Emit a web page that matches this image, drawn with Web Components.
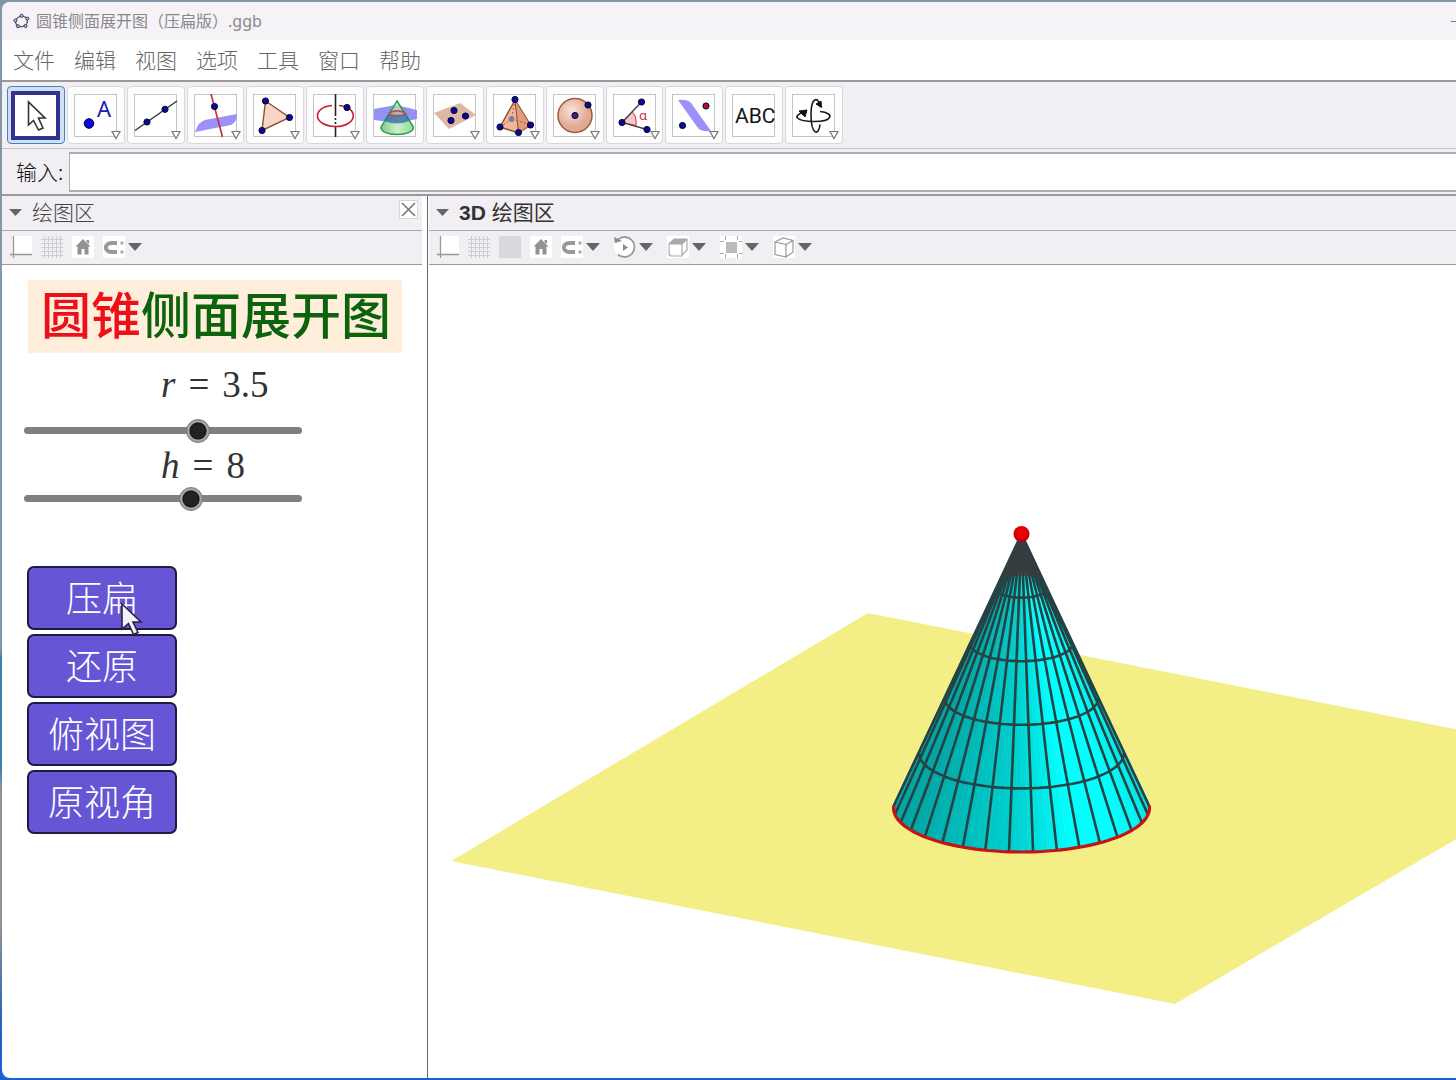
<!DOCTYPE html>
<html lang="zh-CN">
<head>
<meta charset="utf-8">
<title>圆锥侧面展开图（压扁版）.ggb</title>
<style>
html,body{height:100%}
body{margin:0;overflow:hidden;font-family:"Noto Sans","Noto Sans CJK SC",sans-serif;
background:linear-gradient(#8497a6 0 60%,#3f7fae 61% 71%,#8f9298 73% 86%,#2f63b8 94%,#1660d8)}
dock-panel b{font-weight:700}
.space .name{font-weight:400;color:#333}
</style>
</head>
<body>
<app-window>
  <title-bar slot="top">圆锥侧面展开图（压扁版）.ggb</title-bar>
  <menu-bar slot="top" items="文件 编辑 视图 选项 工具 窗口 帮助"></menu-bar>
  <tool-bar slot="top"></tool-bar>
  <command-bar slot="top"></command-bar>
  <dock-panel class="plane" closable>
    <span slot="title" class="name">绘图区</span>
    <style-bar slot="tools" icons="axes grid home magnet"></style-bar>
    <control-board></control-board>
  </dock-panel>
  <dock-panel class="space">
    <span slot="title" class="name"><b>3D</b> 绘图区</span>
    <style-bar slot="tools" icons="axes grid plane home magnet rotate view clip cube"></style-bar>
    <cone-view></cone-view>
  </dock-panel>
</app-window>

<script>
function define(name, html, setup){
  const t = document.createElement('template');
  t.innerHTML = html;
  customElements.define(name, class extends HTMLElement{
    constructor(){ super(); this.attachShadow({mode:'open'}).append(t.content.cloneNode(true)); }
    connectedCallback(){ if(setup && !this.ready){ this.ready = true; setup(this, this.shadowRoot); } }
  });
}

define('app-window', `
<style>
:host{display:flex;flex-direction:column;height:100vh;box-sizing:border-box;padding:2px 0 2px 2px}
.frame{flex:1;display:flex;flex-direction:column;min-height:0;background:#fff;border-radius:8px 0 0 8px;overflow:hidden}
.docks{flex:1;display:flex;min-height:0}
::slotted(.plane){flex:0 0 420px;min-width:0;border-right:1px solid #666;padding-right:5px}
::slotted(.space){flex:1;min-width:0;margin-left:1px}
</style>
<div class="frame"><slot name="top"></slot><div class="docks"><slot></slot></div></div>`);

define('title-bar', `
<style>
:host{display:flex;align-items:center;height:38px;background:#f5f3f7;color:#8a888c;font-size:16px;line-height:22px}
svg{display:block;margin:0 6px 0 11px}
.name{flex:1}
button{border:0;background:none;padding:0;width:5px;height:20px;display:flex;align-items:center}
button i{height:1px;width:5px;background:#777}
</style>
<svg width="17" height="17" viewBox="0 0 17 17"><ellipse cx="8.5" cy="8.5" rx="6" ry="5.2" fill="none" stroke="#66646c" stroke-width="1.4" transform="rotate(-20 8.5 8.5)"/><g fill="#c9c6f2" stroke="#33315e"><circle cx="8.5" cy="2.8" r="1.5"/><circle cx="14.4" cy="5.6" r="1.5"/><circle cx="12.5" cy="13" r="1.5"/><circle cx="5" cy="13.2" r="1.5"/><circle cx="2.4" cy="7.5" r="1.5"/></g></svg>
<span class="name"><slot></slot></span>
<button aria-label="最小化"><i></i></button>`);

define('menu-bar', `
<style>
:host{display:block;background:#fff;border-bottom:2px solid #9b999c}
nav{display:flex;gap:19px;padding:0 11px 2px;height:38px;align-items:center}
button{border:0;background:none;padding:0;font:300 21px/30px "Noto Sans CJK SC",sans-serif;color:#666}
</style><nav></nav>`, (el, root) => {
  root.querySelector('nav').innerHTML = el.getAttribute('items').split(' ').map(x => `<button>${x}</button>`).join('');
});

define('tool-button', `
<style>
:host{display:flex;flex:1;min-width:0}
button{flex:1;min-width:0;display:flex;justify-content:center;align-items:center;padding:0;border:1px solid #d9d7dc;border-radius:4px;background:#fdfdfe;height:58px;overflow:hidden}
:host([selected]) button{border-color:#4d7fb8;background:#cfe1f6}
</style><button><slot></slot></button>`, (el, root) => root.querySelector('button').setAttribute('aria-label', el.getAttribute('label')));

const dot = (x,y,r=3.1,f='#0a0a8c') => `<circle cx="${x}" cy="${y}" r="${r}" fill="${f}" stroke="#05053c" stroke-width="1"/>`;
const TOOLS = [
 ['移动', `<rect x="13" y="93" width="45" height="45" fill="#fff" stroke="#33338e" stroke-width="4"/><path d="M28.5 102V125L33.5 120.5L38.5 130L43 128L38.5 118H45Z" fill="#fff" stroke="#333" stroke-width="1.6"/>`, 'bare'],
 ['点', dot(89,123.5,4.8,'#0808d8')+`<text x="97" y="117" font-family="Noto Sans" font-size="22" fill="#1717c4">A</text>`],
 ['直线', `<path d="M135 130.5L177 101" stroke="#333" stroke-width="1.4"/>`+dot(147,122)+dot(165,109.3)],
 ['垂线', `<path d="M195 132Q199 121 205 120L237 114Q237 122 231 125Z" fill="#9a92fa"/><path d="M211 94L222.5 137" stroke="#c8283c" stroke-width="1.6"/>`+dot(214.5,106.5)],
 ['多边形', `<path d="M265.5 101L289.5 117.5L262 130.5Z" fill="#f8d5c6" stroke="#8a5233" stroke-width="1.4"/>`+dot(265.5,101)+dot(289.5,117.5)+dot(262,130.5)],
 ['绕轴圆', `<path d="M335.5 94V137" stroke="#222" stroke-width="1.6" stroke-dasharray="22 2 2 2 2 2 20"/><path d="M339 105.5C359 107 358 126 336 126.5C312 126 312 107 332 105.5" fill="none" stroke="#cc1f2e" stroke-width="1.6"/>`+dot(347,107.5)],
 ['相交曲线', `<path d="M374 109L396 105L417 110L417 119L397 123L374 120Z" fill="#9291f4"/><path d="M397 101L413.5 127C414 137 380 137 381 127Z" fill="url(#gr)" fill-opacity=".75" stroke="#2a9a3c" stroke-width="1.4"/><path d="M384.5 121Q397 126 409.5 121L405.5 114H388.5Z" fill="#2b5cae" opacity=".65"/><path d="M388.5 113.5Q397 119 406 113.5Q397 108 388.5 113.5" fill="#b0a4a8" fill-opacity=".6" stroke="#c04343" stroke-width="1.4"/>`, 'flat'],
 ['平面', `<path d="M434 113L460 103L476 115L449 129Z" fill="#ddb7a8"/>`+dot(454,110.5)+dot(465.5,116)+dot(451,120.5)],
 ['棱锥', `<path d="M515 100L500 127L518.5 133L530.5 125Z" fill="#efb89c" stroke="#8a4a2e" stroke-width="1.4"/><path d="M518.5 133L530.5 125L515 100Z" fill="#dd9270" opacity=".7"/><path d="M515 100L518.5 133" stroke="#8a4a2e"/><path d="M515 100L511.5 119L530.5 125M511.5 119L500 127" fill="none" stroke="#b54d3c" stroke-dasharray="2 2"/><circle cx="511.5" cy="119" r="3" fill="#817d9c"/>`+dot(515,99.5)+dot(500,127)+dot(518.5,132.5)+dot(530.5,125)],
 ['球面', `<circle cx="575" cy="115.5" r="17" fill="url(#sp)" stroke="#9c5b3a" stroke-width="1.5"/>`+dot(575,115.5,3.1,'#402078')+dot(588,105)],
 ['角度', `<path d="M622 122.5L632 112Q637 116 636 125.5Z" fill="#f8c6cc" stroke="#d02c40"/><path d="M641.5 102L622 122.5L647 129.5" fill="none" stroke="#444" stroke-width="1.4"/><text x="639" y="120" font-family="Noto Sans" font-size="13" fill="#d02c40">α</text>`+dot(641.5,102)+dot(622,122.5)+dot(647,129.5)],
 ['平面对称', `<path d="M678 100Q687 99 691 103L711 131Q702 132 698 128Z" fill="#9a92fa"/>`+dot(682.5,125.5)+dot(706,106,3.1,'#b01420')],
 ['文本', `<text x="735" y="123" font-family="Roboto" font-size="21" fill="#151515">ABC</text>`, 'flat'],
 ['旋转视图', `<g fill="none" stroke="#1a1a1a" stroke-width="1.6"><path d="M820.5 107C818 95 811 98 811 114C811 136 819 136 820 124.5"/><path d="M804 112C791 116 797 121.5 814 121.5C833 121.5 835 113 820 111.5"/></g><path d="M816 104L821.5 107.5L821 101ZM799 111L807 110L805 117Z" fill="#111" stroke="#111"/>`]
];
define('tool-bar', `
<style>
:host{display:block;background:#f1eff3;border-bottom:1px solid #c3c1c5}
.row{display:flex;gap:2px;max-width:836px;padding:4px 5px}
svg{flex:none;display:block}
</style><div class="row"></div>`, (el, root) => {
  root.querySelector('.row').innerHTML = TOOLS.map(([label, art, kind], i) => {
    const x = Math.round(7 + 59.85*i);
    return `<tool-button label="${label}" ${i ? '' : 'selected'}><svg width="56" height="56" viewBox="${x+1} 87 56 56">
      <defs><linearGradient id="gr"><stop stop-color="#58b868"/><stop offset=".5" stop-color="#b6ecb8"/><stop offset="1" stop-color="#6cca78"/></linearGradient><radialGradient id="sp" cx=".4" cy=".35"><stop stop-color="#fae2d8"/><stop offset="1" stop-color="#e0aa92"/></radialGradient></defs>
      ${kind==='bare' ? '' : `<rect x="${x+7}.5" y="94.5" width="42" height="42" fill="#fff" stroke="#c4c4c8"/>`}${art}
      ${kind ? '' : `<path d="M${x+45} 131.5H${x+53}L${x+49} 138.5Z" fill="#fff" stroke="#777" stroke-width="1.2"/>`}</svg></tool-button>`;
  }).join('');
});

define('command-bar', `
<style>
:host{display:block;background:#f1eff3;border-bottom:2px solid #9b999c}
form{display:flex;align-items:center;padding:3px 0 2px 14px;gap:3px}
label{font:300 21px/30px "Noto Sans CJK SC",sans-serif;color:#111;width:50px;white-space:nowrap;padding-bottom:2px}
input{flex:1;min-width:0;height:40px;box-sizing:border-box;border:solid #adabb0;border-width:2px 0 2px 1px;background:#fff;font-size:21px;padding:0 6px;outline:0}
</style><form><label for="cmd">输入:</label><input id="cmd" type="text" autocomplete="off"></form>`);

define('dock-panel', `
<style>
:host{display:flex;flex-direction:column;min-height:0}
header{display:flex;align-items:center;gap:10px;height:34px;padding:0 4px 0 7px;background:#f1eff3;border-bottom:1px solid #aaa8ac;font:300 21px/30px "Liberation Sans","Noto Sans CJK SC",sans-serif;color:#444}
.name{flex:1}
.tools{background:#f1eff3;border-bottom:1px solid #999}
.body{flex:1;min-height:0;overflow:hidden;display:flex}
::slotted(*){flex:1}
button{width:19px;height:19px;padding:0;border:1px solid #d8d6da;background:#fff;display:none;margin-bottom:8px}
:host([closable]) button{display:block}
svg{display:block}
</style>
<header><svg width="13" height="8" viewBox="0 0 13 8"><path d="M0 0H13L6.5 7Z" fill="#666"/></svg><span class="name"><slot name="title"></slot></span><button aria-label="关闭"><svg width="17" height="17" viewBox="0 0 17 17"><path d="M2 2L15 15M15 2L2 15" stroke="#777" stroke-width="1.6"/></svg></button></header>
<div class="tools"><slot name="tools"></slot></div><div class="body"><slot></slot></div>`);

const W = '<rect width="22" height="22" fill="#fff"/>';
const STYLE_ICONS = {
 axes:['坐标轴', '<path d="M3 0H22V19H3Z" fill="#fff"/><path d="M3.5 0V22M0 18.5H22" stroke="#999" stroke-width="1.3"/>'],
 grid:['网格', '<path d="M3.5 0V22M7.5 0V22M11.5 0V22M15.5 0V22M19.5 0V22M0 3.5H22M0 7.5H22M0 11.5H22M0 15.5H22M0 19.5H22" stroke="#cfcdd1"/>'],
 plane:['平面', '<rect width="22" height="22" fill="#d9d8da"/>'],
 home:['标准视图', W+'<path d="M11 3L18.5 10.5H16.5V18.5H12.5V13H9.5V18.5H5.5V10.5H3.5ZM14.5 4H17V8L14.5 6Z" fill="#929292"/>'],
 magnet:['点吸附', W+'<path d="M14 7H8.5C1 7 1 16 8.5 16H14" fill="none" stroke="#999" stroke-width="4"/><path d="M17.5 5.5H20.5V8.5H17.5ZM17.5 14.5H20.5V17.5H17.5Z" fill="#aaa"/>', 1],
 rotate:['旋转', '<circle cx="11" cy="11" r="11" fill="#fff"/><path d="M4 3.5A10 10 0 1 1 4 18.5" fill="none" stroke="#999" stroke-width="1.8"/><path d="M0 1L8 5L1 7ZM9 8L14 11.5L9 15Z" fill="#8c8c8c"/>', 1],
 view:['视图方向', W+'<path d="M2 8L7 3H20L15 8Z" fill="#aaa"/><path d="M3 8H15V20H5Q2 20 2 17V8L7 3H20V14L15 19V8L20 3" fill="none" stroke="#aaa" stroke-width="1.2"/>', 1],
 clip:['剪裁', W+'<rect x="6" y="6" width="11" height="11" fill="#bbb"/><path d="M5.5 0V4M17.5 0V4M5.5 18V22M17.5 18V22M0 5.5H4M19 5.5H22M0 17.5H4M19 17.5H22" stroke="#aaa"/>', 1],
 cube:['投影', W+'<path d="M2 6L13 8.5V21L2 18.5ZM2 6L10 2L20 4.5V16L13 21M13 8.5L20 4.5" fill="none" stroke="#999" stroke-width="1.2"/>', 1]
};
define('style-bar', `
<style>
:host{display:block}
div{display:flex;gap:9px;padding:5px 8px 6px}
button{display:flex;align-items:center;gap:3px;padding:0;border:0;background:none;height:22px}
button.drop{margin-right:5px}
svg{display:block}
</style><div></div>`, (el, root) => {
  root.querySelector('div').innerHTML = el.getAttribute('icons').split(' ').map(k => {
    const [label, art, drop] = STYLE_ICONS[k];
    return `<button aria-label="${label}" class="${drop ? 'drop' : ''}"><svg width="22" height="22" viewBox="0 0 22 22">${art}</svg>${drop ? '<svg width="14" height="8" viewBox="0 0 14 8"><path d="M0 0H14L7 8Z" fill="#666"/></svg>' : ''}</button>`;
  }).join('');
});

define('value-slider', `
<style>
:host{display:flex;flex-direction:column;gap:var(--gap,0);width:278px}
label{display:flex;gap:13px;padding-left:137px;font:37px/40px "Liberation Serif",serif;color:#333}
i{font-style:italic}
input{appearance:none;-webkit-appearance:none;width:100%;height:24px;margin:0;background:none}
input::-webkit-slider-runnable-track{height:7px;border-radius:4px;background:#808080}
input::-webkit-slider-thumb{-webkit-appearance:none;box-sizing:border-box;width:24px;height:24px;margin-top:-8px;border-radius:50%;border:1px solid #777;background:radial-gradient(circle,#222 0 7px,#111 8px,#a3a3a3 9px)}
</style><label for="s"><i></i><span>=</span><span class="v"></span></label><input id="s" type="range">`, (el, root) => {
  const s = root.querySelector('input'), v = root.querySelector('.v');
  root.querySelector('i').textContent = el.getAttribute('name');
  for (const a of ['min','max','step','value']) s.setAttribute(a, el.getAttribute(a));
  s.value = el.getAttribute('value');
  const show = () => v.textContent = s.value;
  s.addEventListener('input', show); show();
});

define('action-button', `
<style>
:host{display:block;position:relative}
button{width:150px;height:64px;box-sizing:border-box;padding:0 0 5px;border:2px solid #1f1a40;border-radius:7px;background:#6656d6;color:#fff;font:300 36px/50px "Noto Sans CJK SC",sans-serif;display:block}
</style><button><slot></slot></button><slot name="over"></slot>`);

define('control-board', `
<style>
:host{display:block;min-width:0;padding:15px 0 0 22px}
h1{margin:0 20px 12px 4px;padding:0 0 0 13px;height:73px;background:#feeedb;color:#0b640b;font:500 50px/64px "Noto Sans CJK SC",sans-serif;white-space:nowrap;box-sizing:border-box}
h1 em{font-style:normal;color:#ee1018}
.r{--gap:13px;padding-bottom:4px}
.buttons{display:flex;flex-direction:column;gap:4px;padding:56px 0 0 3px}
.cursor{position:absolute;z-index:1;left:93px;top:36px;pointer-events:none}
</style>
<h1><em>圆锥</em>侧面展开图</h1>
<value-slider class="r" name="r" min="0" max="5.5" step="0.5" value="3.5"></value-slider>
<value-slider name="h" min="1" max="12.5" step="0.5" value="8"></value-slider>
<div class="buttons">
<action-button>压扁<svg slot="over" class="cursor" width="24" height="36" viewBox="0 0 24 36"><path d="M2 2V27L8.5 21.5L13.5 32.5L18 30.5L13 20H21Z" fill="#f4f2f8" stroke="#29243c" stroke-width="1.6"/></svg></action-button>
<action-button>还原</action-button><action-button>俯视图</action-button><action-button>原视角</action-button>
</div>`);

define('cone-view', `
<style>:host{display:flex;min-width:0}svg{flex:1;width:100%;height:100%;display:block}</style>
<svg viewBox="429 265 1027 813" preserveAspectRatio="xMinYMin slice" role="img" aria-label="圆锥"></svg>`, (el, root) => {
  const cx = 1021.5, top = 534, h = 274, rx = 128, ry = 44, rad = Math.PI/180;
  const at = (a, k) => [cx + rx*k*Math.sin(a*rad), top + k*(h + ry*Math.cos(a*rad))].map(n => n.toFixed(1)).join(' ');
  const tone = [[-100,165],[-60,165],[-30,188],[-5,208],[10,232],[22,255],[50,255],[75,235],[100,200]];
  const shade = a => { for (let i = 1; i < tone.length; i++) if (a <= tone[i][0]) { const [p,u] = tone[i-1], [q,v] = tone[i]; return Math.round(u + (v-u)*(a-p)/(q-p)); } return 200; };
  let s = '<path d="M868 613L1596 757L1175 1004L451 861Z" fill="#f3ef86"/>';
  for (let a = -99; a < 99; a += 3) { const c = `rgb(0,${shade(a)},${shade(a)})`; s += `<path d="M${cx} ${top}L${at(a,1)}L${at(a+3,1)}Z" fill="${c}" stroke="${c}" stroke-width=".6"/>`; }
  let d = '';
  for (let k = 0; k < 9; k++) d += `M${cx} ${top}L${at(5.2+10.85*k,1)}M${cx} ${top}L${at(-5.6-10.85*k,1)}`;
  for (const k of [.2,.4,.6,.8]) { d += 'M' + at(-90,k); for (let a = -86; a <= 90; a += 4) d += 'L' + at(a,k); }
  s += `<path d="${d}" fill="none" stroke="#244345" stroke-width="2.6"/><path d="M${cx} ${top}L${at(-97,.17)}L${at(-50,.14)}L${at(0,.13)}L${at(50,.14)}L${at(97,.17)}Z" fill="#3b3a3e" opacity=".8"/>`;
  let e = 'M' + at(-93,1); for (let a = -90; a <= 93; a += 3) e += 'L' + at(a,1);
  s += `<path d="${e}" fill="none" stroke="#c41414" stroke-width="3.2"/>`;
  s += '<defs><radialGradient id="ball" cx=".5" cy=".4"><stop stop-color="#f00"/><stop offset=".7" stop-color="#e00008"/><stop offset="1" stop-color="#c00008"/></radialGradient></defs><circle cx="1021.5" cy="534" r="8" fill="url(#ball)"/>';
  root.querySelector('svg').innerHTML = s;
});
</script>
</body>
</html>
